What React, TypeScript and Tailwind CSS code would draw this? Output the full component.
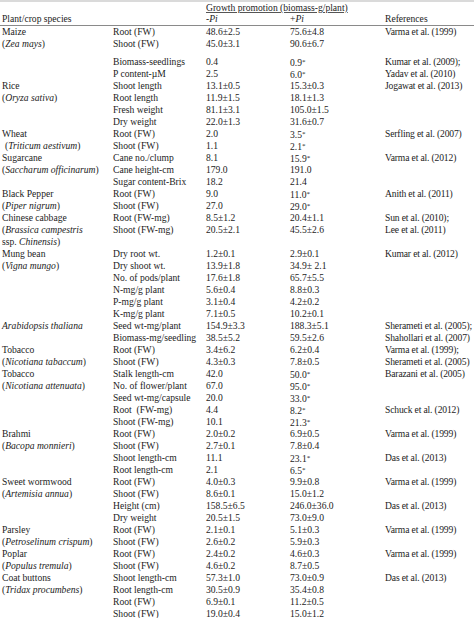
import React from "react";

type Row = {
  species?: React.ReactNode;
  trait?: string;
  minus?: string;
  plus?: string;
  refs?: string;
  gap?: boolean;
};

const sp = (name: string) => (
  <>
    (<i>{name}</i>)
  </>
);

const rows: Row[] = [
  { species: "Maize", trait: "Root (FW)", minus: "48.6±2.5", plus: "75.6±4.8", refs: "Varma et al. (1999)" },
  { species: sp("Zea mays"), trait: "Shoot (FW)", minus: "45.0±3.1", plus: "90.6±6.7" },
  { trait: "Biomass-seedlings", minus: "0.4", plus: "0.9*", refs: "Kumar et al. (2009);", gap: true },
  { trait: "P content-µM", minus: "2.5", plus: "6.0*", refs: "Yadav et al. (2010)" },
  { species: "Rice", trait: "Shoot length", minus: "13.1±0.5", plus: "15.3±0.3", refs: "Jogawat et al. (2013)" },
  { species: sp("Oryza sativa"), trait: "Root length", minus: "11.9±1.5", plus: "18.1±1.3" },
  { trait: "Fresh weight", minus: "81.1±3.1", plus: "105.0±1.5" },
  { trait: "Dry weight", minus: "22.0±1.3", plus: "31.6±0.7" },
  { species: "Wheat", trait: "Root (FW)", minus: "2.0", plus: "3.5*", refs: "Serfling et al. (2007)" },
  { species: <span className="pl-[3px]">{sp("Triticum aestivum")}</span>, trait: "Shoot (FW)", minus: "1.1", plus: "2.1*" },
  { species: "Sugarcane", trait: "Cane no./clump", minus: "8.1", plus: "15.9*", refs: "Varma et al. (2012)" },
  { species: sp("Saccharum officinarum"), trait: "Cane height-cm", minus: "179.0", plus: "191.0" },
  { trait: "Sugar content-Brix", minus: "18.2", plus: "21.4" },
  { species: "Black Pepper", trait: "Root (FW)", minus: "9.0", plus: "11.0*", refs: "Anith et al. (2011)" },
  { species: sp("Piper nigrum"), trait: "Shoot (FW)", minus: "27.0", plus: "29.0*" },
  { species: "Chinese cabbage", trait: "Root (FW-mg)", minus: "8.5±1.2", plus: "20.4±1.1", refs: "Sun et al. (2010);" },
  { species: <>(<i>Brassica campestris</i></>, trait: "Shoot (FW-mg)", minus: "20.5±2.1", plus: "45.5±2.6", refs: "Lee et al. (2011)" },
  { species: <>ssp. <i>Chinensis</i>)</> },
  { species: "Mung bean", trait: "Dry root wt.", minus: "1.2±0.1", plus: "2.9±0.1", refs: "Kumar et al. (2012)" },
  { species: sp("Vigna mungo"), trait: "Dry shoot wt.", minus: "13.9±1.8", plus: "34.9± 2.1" },
  { trait: "No. of pods/plant", minus: "17.6±1.8", plus: "65.7±5.5" },
  { trait: "N-mg/g plant", minus: "5.6±0.4", plus: "8.8±0.3" },
  { trait: "P-mg/g plant", minus: "3.1±0.4", plus: "4.2±0.2" },
  { trait: "K-mg/g plant", minus: "7.1±0.5", plus: "10.2±0.1" },
  { species: <i>Arabidopsis thaliana</i>, trait: "Seed wt-mg/plant", minus: "154.9±3.3", plus: "188.3±5.1", refs: "Sherameti et al. (2005);" },
  { trait: "Biomass-mg/seedling", minus: "38.5±5.2", plus: "59.5±2.6", refs: "Shahollari et al. (2007)" },
  { species: "Tobacco", trait: "Root (FW)", minus: "3.4±6.2", plus: "6.2±0.4", refs: "Varma et al. (1999);" },
  { species: sp("Nicotiana tabaccum"), trait: "Shoot (FW)", minus: "4.3±0.3", plus: "7.8±0.5", refs: "Sherameti et al. (2005)" },
  { species: "Tobacco", trait: "Stalk length-cm", minus: "42.0", plus: "50.0*", refs: "Barazani et al. (2005)" },
  { species: sp("Nicotiana attenuata"), trait: "No. of flower/plant", minus: "67.0", plus: "95.0*" },
  { trait: "Seed wt-mg/capsule", minus: "20.0", plus: "33.0*" },
  { trait: "Root\u00a0 (FW-mg)", minus: "4.4", plus: "8.2*", refs: "Schuck et al. (2012)" },
  { trait: "Shoot (FW-mg)", minus: "10.1", plus: "21.3*" },
  { species: "Brahmi", trait: "Root (FW)", minus: "2.0±0.2", plus: "6.9±0.5", refs: "Varma et al. (1999)" },
  { species: sp("Bacopa monnieri"), trait: "Shoot (FW)", minus: "2.7±0.1", plus: "7.8±0.4" },
  { trait: "Shoot length-cm", minus: "11.1", plus: "23.1*", refs: "Das et al. (2013)" },
  { trait: "Root length-cm", minus: "2.1", plus: "6.5*" },
  { species: "Sweet wormwood", trait: "Root (FW)", minus: "4.0±0.3", plus: "9.9±0.8", refs: "Varma et al. (1999)" },
  { species: sp("Artemisia annua"), trait: "Shoot (FW)", minus: "8.6±0.1", plus: "15.0±1.2" },
  { trait: "Height (cm)", minus: "158.5±6.5", plus: "246.0±36.0", refs: "Das et al. (2013)" },
  { trait: "Dry weight", minus: "20.5±1.5", plus: "73.0±9.0" },
  { species: "Parsley", trait: "Root (FW)", minus: "2.1±0.1", plus: "5.1±0.3", refs: "Varma et al. (1999)" },
  { species: sp("Petroselinum crispum"), trait: "Shoot (FW)", minus: "2.6±0.2", plus: "5.9±0.3" },
  { species: "Poplar", trait: "Root (FW)", minus: "2.4±0.2", plus: "4.6±0.3", refs: "Varma et al. (1999)" },
  { species: sp("Populus tremula"), trait: "Shoot (FW)", minus: "4.6±0.2", plus: "8.7±0.5" },
  { species: "Coat buttons", trait: "Shoot length-cm", minus: "57.3±1.0", plus: "73.0±0.9", refs: "Das et al. (2013)" },
  { species: sp("Tridax procumbens"), trait: "Root length-cm", minus: "30.5±0.9", plus: "35.4±0.8" },
  { trait: "Root (FW)", minus: "6.9±0.1", plus: "11.2±0.5" },
  { trait: "Shoot (FW)", minus: "19.0±0.4", plus: "15.0±1.2" },
];

// star is set a bit smaller, like the journal's asterisk
function Value({ v }: { v?: string }) {
  if (!v) return null;
  if (v.endsWith("*")) {
    return (
      <>
        {v.slice(0, -1)}
        <span className="text-[7px] align-[2px]">*</span>
      </>
    );
  }
  return <>{v}</>;
}

const cols = "grid grid-cols-[111px_93px_84px_95px_minmax(0,1fr)]";

export default function App() {
  return (
    <div
      className="w-[474px] h-[618px] overflow-hidden bg-white text-[#1c1c1c] text-[9.6px] leading-[12px]"
      style={{ fontFamily: '"Liberation Serif", "Times New Roman", serif' }}
    >
      <div className="h-[2px] bg-[#dadada]" />

      {/* header */}
      <div className={`${cols} h-[11px] pl-[2px]`}>
        <div />
        <div />
        <div className="col-span-2 leading-[11px]">
          <span className="underline decoration-[#555] underline-offset-[1px]">
            Growth promotion (biomass-g/plant)
          </span>
        </div>
        <div />
      </div>
      <div className={`${cols} h-[12px] pl-[2px]`}>
        <div>Plant/crop species</div>
        <div />
        <div>
          -<i>Pi</i>
        </div>
        <div>
          +<i>Pi</i>
        </div>
        <div>References</div>
      </div>
      <div className="h-px bg-[#8a8a8a]" />

      {/* body */}
      <div className="flex flex-col">
        {rows.map((r, i) => (
          <div key={i} className={`${cols} h-[12px] pl-[2px] whitespace-nowrap ${r.gap ? "mt-[6px]" : ""}`}>
            <div>{r.species}</div>
            <div>{r.trait}</div>
            <div>
              <Value v={r.minus} />
            </div>
            <div>
              <Value v={r.plus} />
            </div>
            <div className="tracking-[-0.15px]">{r.refs}</div>
          </div>
        ))}
      </div>
    </div>
  );
}
